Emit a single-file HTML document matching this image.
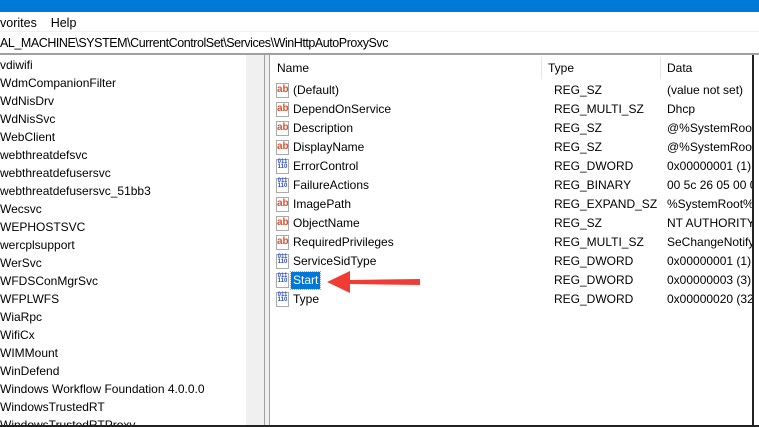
<!DOCTYPE html>
<html><head><style>
body{margin:0;width:759px;height:427px;overflow:hidden;background:#fff;font-family:"Liberation Sans",sans-serif;font-size:12px;color:#000;position:relative}
.abs{position:absolute;white-space:nowrap}
.tl{position:absolute;left:0;line-height:18px}
.r{position:absolute;line-height:19px;height:19px}
.ic{position:absolute;left:276px;width:13px;height:15px;border:1px solid #aaa;background:#fff;box-sizing:border-box;font-size:10px;font-weight:bold;line-height:12px;text-align:center}
.ab{color:#e0502a}
.bin{color:#2a4dd0;font-size:6px;line-height:5px;letter-spacing:0}
</style></head><body>
<div class="abs" style="left:0;top:0;width:759px;height:12px;background:#0078d7"></div>
<div class="abs" style="left:0;top:14px;line-height:18px;font-size:12.5px">vorites&nbsp;&nbsp;&nbsp;&nbsp;Help</div>
<div class="abs" style="left:0;top:31px;width:759px;height:1px;background:#f0f0f0"></div>
<div class="abs" style="left:0;top:35px;line-height:17px;font-size:12.5px;letter-spacing:-0.45px">AL_MACHINE\SYSTEM\CurrentControlSet\Services\WinHttpAutoProxySvc</div>
<div class="abs" style="left:0;top:53px;width:759px;height:2px;background:#a0a0a0"></div>
<div class="abs" style="left:246px;top:55px;width:18px;height:372px;background:#f0f0f0"></div>
<div class="abs" style="left:264px;top:55px;width:1px;height:372px;background:#a0a0a0"></div>
<div class="abs" style="left:265px;top:55px;width:4px;height:372px;background:#f0f0f0"></div>
<div class="abs" style="left:269px;top:55px;width:1px;height:372px;background:#a0a0a0"></div>
<div class="abs" style="left:752px;top:55px;width:2px;height:372px;background:#222"></div>
<div class="abs" style="left:0;top:425px;width:759px;height:2px;background:#222"></div>
<div class="abs" style="left:0;top:55px;width:246px;height:370px;overflow:hidden">
<div style="position:relative;top:1px">
<div class="tl" style="top:0">vdiwifi</div>
<div class="tl" style="top:18px">WdmCompanionFilter</div>
<div class="tl" style="top:36px">WdNisDrv</div>
<div class="tl" style="top:54px">WdNisSvc</div>
<div class="tl" style="top:72px">WebClient</div>
<div class="tl" style="top:90px">webthreatdefsvc</div>
<div class="tl" style="top:108px">webthreatdefusersvc</div>
<div class="tl" style="top:126px">webthreatdefusersvc_51bb3</div>
<div class="tl" style="top:144px">Wecsvc</div>
<div class="tl" style="top:162px">WEPHOSTSVC</div>
<div class="tl" style="top:180px">wercplsupport</div>
<div class="tl" style="top:198px">WerSvc</div>
<div class="tl" style="top:216px">WFDSConMgrSvc</div>
<div class="tl" style="top:234px">WFPLWFS</div>
<div class="tl" style="top:252px">WiaRpc</div>
<div class="tl" style="top:270px">WifiCx</div>
<div class="tl" style="top:288px">WIMMount</div>
<div class="tl" style="top:306px">WinDefend</div>
<div class="tl" style="top:324px">Windows Workflow Foundation 4.0.0.0</div>
<div class="tl" style="top:342px">WindowsTrustedRT</div>
<div class="tl" style="top:360px">WindowsTrustedRTProxy</div>
</div></div>
<div class="abs" style="left:277px;top:60px;line-height:16px">Name</div>
<div class="abs" style="left:541px;top:57px;width:1px;height:22px;background:#e5e5e5"></div>
<div class="abs" style="left:548px;top:60px;line-height:16px">Type</div>
<div class="abs" style="left:660px;top:57px;width:1px;height:22px;background:#e5e5e5"></div>
<div class="abs" style="left:667px;top:60px;line-height:16px">Data</div>
<div class="abs" style="left:270px;top:79px;width:482px;height:230px;overflow:hidden">
<div style="position:relative;left:-270px;top:-78px">
<div class="r" style="top:80px"><span class="ic ab" style="top:2px">ab</span><span class="abs" style="left:293px">(Default)</span><span class="abs" style="left:554px">REG_SZ</span><span class="abs" style="left:667px">(value not set)</span></div>
<div class="r" style="top:99px"><span class="ic ab" style="top:2px">ab</span><span class="abs" style="left:293px">DependOnService</span><span class="abs" style="left:554px">REG_MULTI_SZ</span><span class="abs" style="left:667px">Dhcp</span></div>
<div class="r" style="top:118px"><span class="ic ab" style="top:2px">ab</span><span class="abs" style="left:293px">Description</span><span class="abs" style="left:554px">REG_SZ</span><span class="abs" style="left:667px">@%SystemRoot%\</span></div>
<div class="r" style="top:137px"><span class="ic ab" style="top:2px">ab</span><span class="abs" style="left:293px">DisplayName</span><span class="abs" style="left:554px">REG_SZ</span><span class="abs" style="left:667px">@%SystemRoot%\</span></div>
<div class="r" style="top:156px"><span class="ic bin" style="top:2px">011<br>110</span><span class="abs" style="left:293px">ErrorControl</span><span class="abs" style="left:554px">REG_DWORD</span><span class="abs" style="left:667px">0x00000001 (1)</span></div>
<div class="r" style="top:175px"><span class="ic bin" style="top:2px">011<br>110</span><span class="abs" style="left:293px">FailureActions</span><span class="abs" style="left:554px">REG_BINARY</span><span class="abs" style="left:667px">00 5c 26 05 00 00 00</span></div>
<div class="r" style="top:194px"><span class="ic ab" style="top:2px">ab</span><span class="abs" style="left:293px">ImagePath</span><span class="abs" style="left:554px">REG_EXPAND_SZ</span><span class="abs" style="left:667px">%SystemRoot%\sy</span></div>
<div class="r" style="top:213px"><span class="ic ab" style="top:2px">ab</span><span class="abs" style="left:293px">ObjectName</span><span class="abs" style="left:554px">REG_SZ</span><span class="abs" style="left:667px">NT AUTHORITY\Lo</span></div>
<div class="r" style="top:232px"><span class="ic ab" style="top:2px">ab</span><span class="abs" style="left:293px">RequiredPrivileges</span><span class="abs" style="left:554px">REG_MULTI_SZ</span><span class="abs" style="left:667px">SeChangeNotifyPri</span></div>
<div class="r" style="top:251px"><span class="ic bin" style="top:2px">011<br>110</span><span class="abs" style="left:293px">ServiceSidType</span><span class="abs" style="left:554px">REG_DWORD</span><span class="abs" style="left:667px">0x00000001 (1)</span></div>
<div class="r" style="top:270px"><span class="ic bin" style="top:2px">011<br>110</span><span class="abs" style="left:291px;top:1px;height:17px;line-height:17px;background:#0078d7;color:#fff;padding:0 2px;outline:1px dotted #f90">Start</span><span class="abs" style="left:554px">REG_DWORD</span><span class="abs" style="left:667px">0x00000003 (3)</span></div>
<div class="r" style="top:289px"><span class="ic bin" style="top:2px">011<br>110</span><span class="abs" style="left:293px">Type</span><span class="abs" style="left:554px">REG_DWORD</span><span class="abs" style="left:667px">0x00000020 (32)</span></div>
</div></div>
<svg class="abs" style="left:320px;top:269px" width="110" height="28"><polygon points="7,13 30,2 30,11 100,10 100,16 30,15 30,24" fill="#f03c32"/></svg>
</body></html>
